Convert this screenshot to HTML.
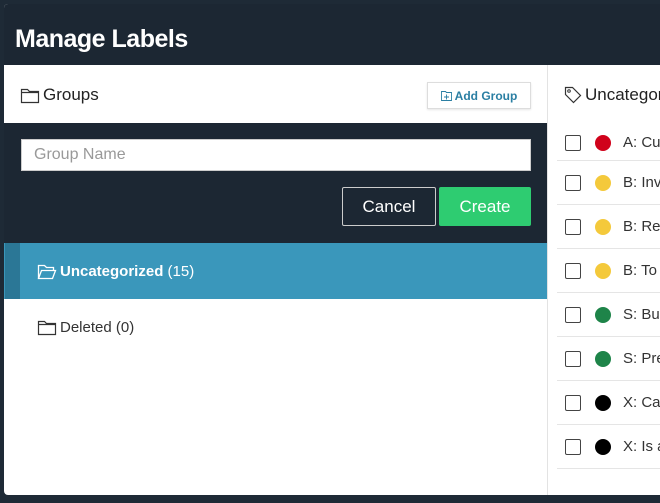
<!DOCTYPE html>
<html><head><style>
*{box-sizing:border-box;margin:0;padding:0}
body{width:660px;height:503px;background:#1e2a36;font-family:"Liberation Sans",sans-serif;position:relative;overflow:hidden}
.modal{position:absolute;left:4px;top:4px;width:660px;height:491px;background:#fff;border-radius:4px;overflow:hidden}
.hdr{position:absolute;left:0;top:0;width:100%;height:61px;background:#1c2733;color:#fff;font-weight:bold;font-size:25px;padding:21px 0 0 11px;letter-spacing:-0.5px}
.left{position:absolute;left:0;top:61px;width:543px;height:430px}
.gh{height:58px;position:relative;font-size:17px;color:#222}
.gh .t{position:absolute;left:16px;top:20px;display:flex;align-items:center;gap:3px}
.add{position:absolute;left:423px;top:17px;width:104px;height:27px;border:1px solid #ddd;box-shadow:0 1px 2px rgba(0,0,0,.1);color:#2b7fa3;font-size:12px;font-weight:bold;display:flex;align-items:center;justify-content:center;gap:3px}
.form{height:120px;background:#1c2733;position:relative}
.inp{position:absolute;left:17px;top:16px;width:510px;height:32px;background:#fff;border:1px solid #ccc;color:#999;font-size:16px;padding:6px 12px}
.cancel{position:absolute;left:338px;top:64px;width:94px;height:39px;border:1px solid #ccc;color:#fff;font-size:17px;display:flex;align-items:center;justify-content:center;border-radius:2px}
.create{position:absolute;left:435px;top:64px;width:92px;height:39px;background:#2ecc71;color:#fff;font-size:17px;display:flex;align-items:center;justify-content:center;border-radius:2px}
.sel{height:56px;background:#3a97bb;position:relative;color:#fff;font-size:15px}
.sel .stripe{position:absolute;left:1px;top:0;width:15px;height:100%;background:#2b7796}
.row{position:absolute;left:33px;display:flex;align-items:center;gap:3px;white-space:pre}
.del{height:56px;position:relative;font-size:15px;color:#333}
.right{position:absolute;left:543px;top:61px;width:120px;height:430px;border-left:1px solid #e3e3e3}
.rh{height:58px;position:relative;font-size:17px;color:#222}
.rh .t{position:absolute;left:16px;top:20px;display:flex;align-items:center;gap:3px;white-space:nowrap}
.lab{height:44px;border-bottom:1px solid #e5e5e5;margin-left:9px;position:relative;font-size:15px;color:#333;white-space:nowrap}
.cb{position:absolute;left:8px;top:14px;width:16px;height:16px;border:1.5px solid #444;border-radius:2px}
.dot{position:absolute;left:38px;top:14px;width:16px;height:16px;border-radius:50%}
.lt{position:absolute;left:66px;top:13px}
</style></head><body>
<div class="modal">
<div class="hdr">Manage Labels</div>
<div class="left">
<div class="gh"><div class="t"><svg width="20" height="17" viewBox="0 0 20 17"><path d="M1.5 2.5h6l2 2h9v11h-17z M1.5 5.5h17" fill="none" stroke="#333" stroke-width="1.2"/></svg>Groups</div>
<div class="add"><svg width="11" height="11" viewBox="0 0 11 11"><path d="M.5 1.5h4l1 1h5v8h-10z M5.5 4.5v5M3 7h5" fill="none" stroke="#2b7fa3" stroke-width=".9"/></svg>Add Group</div></div>
<div class="form"><div class="inp">Group Name</div><div class="cancel">Cancel</div><div class="create">Create</div></div>
<div class="sel"><div class="stripe"></div><div class="row" style="top:20px"><svg width="20" height="17" viewBox="0 0 20 17"><path d="M1.5 15.5v-13h6l2 2h7v3 M1.5 15.5l3-8h14l-3 8z" fill="none" stroke="#fff" stroke-width="1.3"/></svg><span><b>Uncategorized</b> (15)</span></div></div>
<div class="del"><div class="row" style="top:20px"><svg width="20" height="17" viewBox="0 0 20 17"><path d="M1.5 2.5h6l2 2h9v11h-17z M1.5 5.5h17" fill="none" stroke="#333" stroke-width="1.2"/></svg>Deleted (0)</div></div>
</div>
<div class="right">
<div class="rh"><div class="t"><svg width="18" height="18" viewBox="0 0 18 18"><path d="M1.5 1.5h7l8 8-7 7-8-8z" fill="none" stroke="#333" stroke-width="1.2"/><circle cx="5" cy="5" r="1.3" fill="none" stroke="#333"/></svg>Uncategorized</div></div>
<div class="lab" style="height:38px"><div class="cb" style="top:12px"></div><div class="dot" style="background:#d0021b;top:12px"></div><div class="lt" style="top:11px">A: Cu</div></div>
<div class="lab"><div class="cb"></div><div class="dot" style="background:#f4c93b"></div><div class="lt">B: Inv</div></div>
<div class="lab"><div class="cb"></div><div class="dot" style="background:#f4c93b"></div><div class="lt">B: Re</div></div>
<div class="lab"><div class="cb"></div><div class="dot" style="background:#f4c93b"></div><div class="lt">B: To</div></div>
<div class="lab"><div class="cb"></div><div class="dot" style="background:#1e8449"></div><div class="lt">S: Bu</div></div>
<div class="lab"><div class="cb"></div><div class="dot" style="background:#1e8449"></div><div class="lt">S: Pre</div></div>
<div class="lab"><div class="cb"></div><div class="dot" style="background:#000"></div><div class="lt">X: Ca</div></div>
<div class="lab"><div class="cb"></div><div class="dot" style="background:#000"></div><div class="lt">X: Is a</div></div>
</div>
</div>
</body></html>
